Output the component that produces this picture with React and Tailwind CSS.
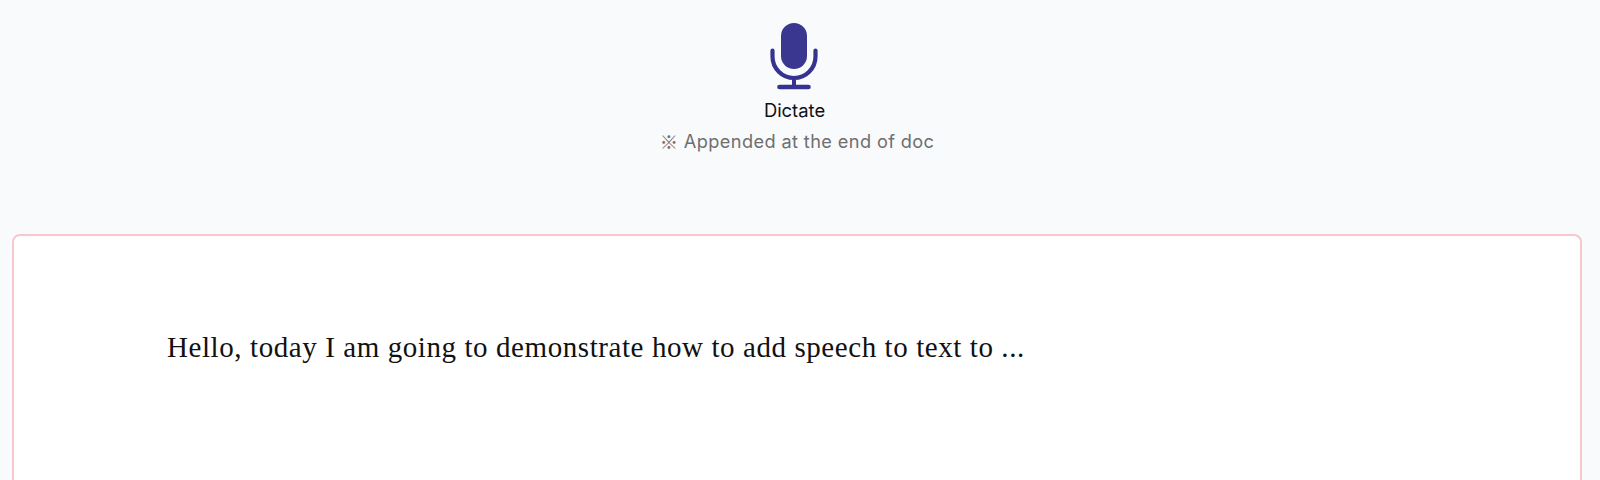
export default function App() {
  return (
    <div className="h-[480px] overflow-hidden bg-[#f9fafc] px-[12px] font-['Inter','Noto_Sans',sans-serif]">
      <div className="flex flex-col items-center pt-[22px]">
        <div className="flex flex-col items-center pr-[11px]">
          <svg width="48" height="68" viewBox="0 0 48 68" className="block">
            <rect x="11" y="1" width="26" height="46" rx="13" fill="#3a3791" />
            <path d="M2.500 28.500V34.500a21.500 21.500 0 0 0 43 0v-6" fill="none" stroke="#35338f" strokeWidth="4.200" strokeLinecap="round" />
            <path d="M24 57v8" stroke="#35338f" strokeWidth="4" />
            <path d="M9.500 65h29" stroke="#35338f" strokeWidth="4.600" strokeLinecap="round" />
          </svg>
          <div className="mt-[8px] text-[18.400px] leading-[24px] text-[#111111]">Dictate</div>
        </div>
        <div className="mt-[7px] flex items-center gap-[6px] pr-[6px] text-[18.200px] leading-[24px] tracking-[0.38px] text-[#6f6f6f]">
          <span className="font-['Noto_Sans_CJK_JP',sans-serif] tracking-normal">※</span>
          <span>Appended at the end of doc</span>
        </div>
      </div>
      <div className="mt-[81px] h-[300px] w-[1570px] rounded-[8px] border-2 border-[#f7c8ca] bg-white pl-[153px] pt-[94px]">
        <p className="font-['Liberation_Serif',serif] text-[29px] leading-[34px] tracking-[0.58px] text-[#111111]">Hello, today I am going to demonstrate how to add speech to text to ...</p>
      </div>
    </div>
  );
}
